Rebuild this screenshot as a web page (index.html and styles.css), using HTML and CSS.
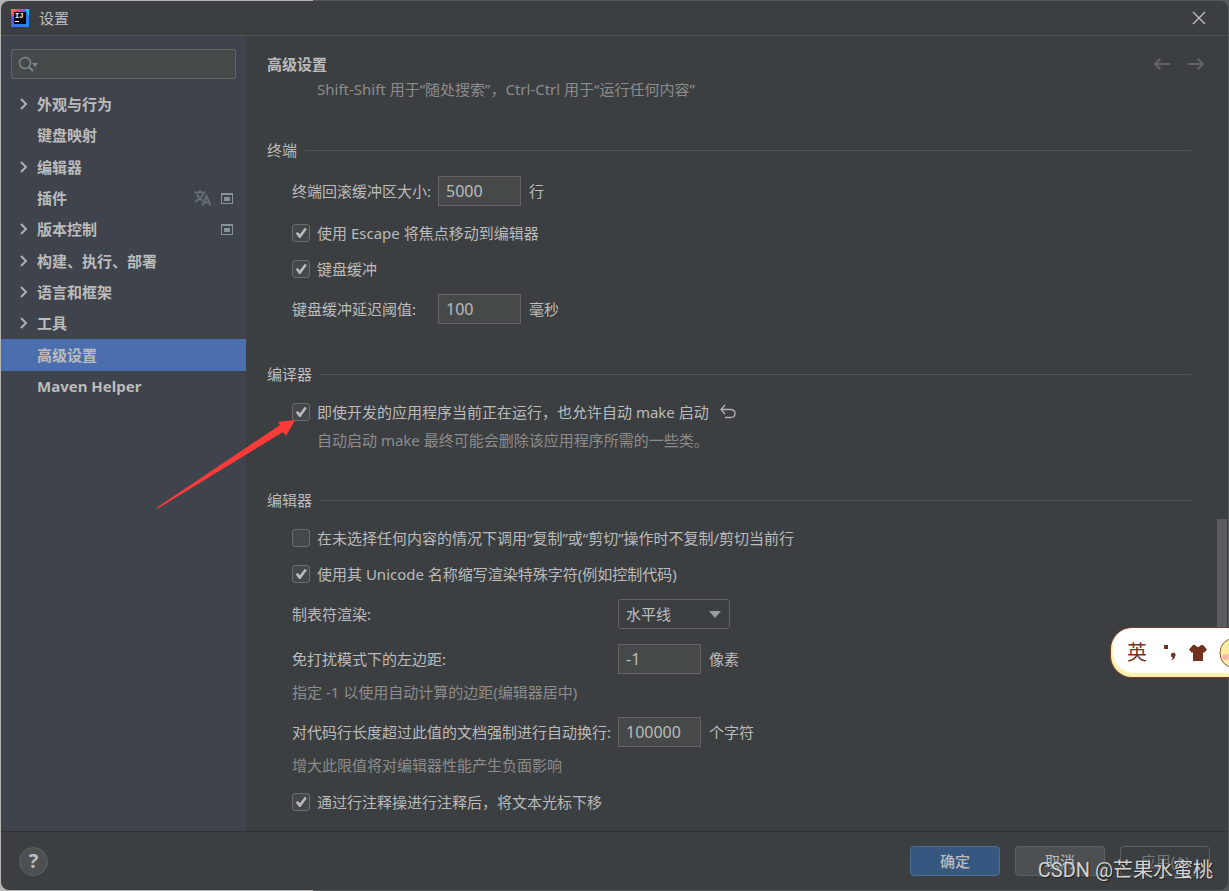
FILE: index.html
```html
<!DOCTYPE html>
<html lang="zh-CN">
<head>
  <meta charset="UTF-8">
  <meta name="viewport" content="width=device-width, initial-scale=1.0">
  <title>设置</title>
  <link rel="stylesheet" href="styles.css">
</head>
<body>
  <div class="window">
    <header class="titlebar">
      <svg class="logo" width="18" height="18" viewBox="0 0 18 18">
        <defs>
          <linearGradient id="ij" x1="0" y1="0" x2="1" y2="1">
            <stop offset="0" stop-color="#fd8224"/>
            <stop offset="0.25" stop-color="#e8457c"/>
            <stop offset="0.45" stop-color="#3f6df5"/>
            <stop offset="1" stop-color="#1d8bf8"/>
          </linearGradient>
        </defs>
        <rect width="18" height="18" fill="url(#ij)"/>
        <path d="M14 0h4v7z" fill="#22c0f5"/>
        <path d="M0 6l3 2v6l-3 2z" fill="#5a55e0"/>
        <rect x="3" y="3" width="12" height="12" fill="#080510"/>
        <text x="4" y="9">IJ</text>
        <path d="M4 12h4v1H4z" fill="#fff"/>
      </svg>
      <span class="window-title">设置</span>
      <button class="icon-btn" aria-label="关闭">
        <svg width="14" height="14" viewBox="0 0 14 14"><path d="M1 1l12 12M13 1L1 13" stroke="#c0c0c0" stroke-width="1.300"/></svg>
      </button>
    </header>

    <div class="main">
      <nav class="sidebar">
        <div class="search">
          <svg width="22" height="18" viewBox="0 0 22 18">
            <circle cx="7" cy="8" r="5.500" fill="none" stroke="#7f8b91" stroke-width="1.400"/>
            <path d="M11 12l4 4" stroke="#7f8b91" stroke-width="1.800"/>
            <path d="M14 8h6l-3 4z" fill="#7f8b91"/>
          </svg>
          <input type="text" aria-label="搜索">
        </div>
        <ul class="tree">
          <li><svg class="chevron" viewBox="0 0 8 12"><path d="M1 1l5 5-5 5"/></svg><a href="#">外观与行为</a></li>
          <li><a href="#">键盘映射</a></li>
          <li><svg class="chevron" viewBox="0 0 8 12"><path d="M1 1l5 5-5 5"/></svg><a href="#">编辑器</a></li>
          <li>
            <a href="#">插件</a>
            <svg class="lang" width="18" height="18" viewBox="0 0 18 18"><path d="M0.500 3.500h11M6 1v2.500M9.500 3.500Q8 9.500 1 12.500M3 5.500q2 4.500 6 6M8.500 16.500l4-9.500 4 9.500M10 13.500h5"/></svg>
            <svg class="project" width="12" height="11" viewBox="0 0 12 11"><path d="M0 0h12v11H0zM1 2v8h10V2z" fill-rule="evenodd"/><path d="M3 4h6v4H3z"/></svg>
          </li>
          <li>
            <svg class="chevron" viewBox="0 0 8 12"><path d="M1 1l5 5-5 5"/></svg><a href="#">版本控制</a>
            <svg class="project" width="12" height="11" viewBox="0 0 12 11"><path d="M0 0h12v11H0zM1 2v8h10V2z" fill-rule="evenodd"/><path d="M3 4h6v4H3z"/></svg>
          </li>
          <li><svg class="chevron" viewBox="0 0 8 12"><path d="M1 1l5 5-5 5"/></svg><a href="#">构建、执行、部署</a></li>
          <li><svg class="chevron" viewBox="0 0 8 12"><path d="M1 1l5 5-5 5"/></svg><a href="#">语言和框架</a></li>
          <li><svg class="chevron" viewBox="0 0 8 12"><path d="M1 1l5 5-5 5"/></svg><a href="#">工具</a></li>
          <li class="selected"><a href="#">高级设置</a></li>
          <li><a href="#">Maven Helper</a></li>
        </ul>
      </nav>

      <div class="content">
        <div class="content-head">
          <h1>高级设置</h1>
          <button class="icon-btn" aria-label="后退">
            <svg width="18" height="14" viewBox="0 0 18 14"><path d="M17 7H2M7.500 1.500L2 7l5.500 5.500" fill="none" stroke="#606263" stroke-width="2"/></svg>
          </button>
          <button class="icon-btn" aria-label="前进">
            <svg width="18" height="14" viewBox="0 0 18 14"><path d="M1 7h15M10.500 1.500L16 7l-5.500 5.500" fill="none" stroke="#606263" stroke-width="2"/></svg>
          </button>
        </div>

        <div class="scroll">
          <div class="page">
            <p class="hint indent first">Shift-Shift 用于“随处搜索”，Ctrl-Ctrl 用于“运行任何内容”</p>

            <section class="narrow">
              <h2>终端</h2>
              <div class="field">
                <label for="scrollback">终端回滚缓冲区大小:</label>
                <input type="text" id="scrollback" value="5000">
                <span>行</span>
              </div>
              <label class="check"><input type="checkbox" checked>使用 Escape 将焦点移动到编辑器</label>
              <label class="check"><input type="checkbox" checked>键盘缓冲</label>
              <div class="field">
                <label for="delay">键盘缓冲延迟阈值:</label>
                <input type="text" id="delay" value="100">
                <span>毫秒</span>
              </div>
            </section>

            <section>
              <h2>编译器</h2>
              <div class="check">
                <input type="checkbox" id="automake" checked>
                <label for="automake">即使开发的应用程序当前正在运行，也允许自动 make 启动</label>
                <button class="icon-btn reset" aria-label="重置">
                  <svg width="16" height="16" viewBox="0 0 16 16"><path d="M5 1L1 5.500 5 10M1 5.500h9.500q4.500 0 4.500 4t-4.500 4H5" fill="none" stroke="#afb1b3" stroke-width="1.300"/></svg>
                </button>
              </div>
              <p class="hint indent">自动启动 make 最终可能会删除该应用程序所需的一些类。</p>
            </section>

            <section class="wide">
              <h2>编辑器</h2>
              <label class="check"><input type="checkbox">在未选择任何内容的情况下调用“复制”或“剪切”操作时不复制/剪切当前行</label>
              <label class="check"><input type="checkbox" checked>使用其 Unicode 名称缩写渲染特殊字符(例如控制代码)</label>
              <div class="field">
                <label for="tabs">制表符渲染:</label>
                <div class="select">
                  <select id="tabs">
                    <option>水平线</option>
                  </select>
                </div>
              </div>
              <div class="field">
                <label for="margin">免打扰模式下的左边距:</label>
                <input type="text" id="margin" value="-1">
                <span>像素</span>
              </div>
              <p class="hint">指定 -1 以使用自动计算的边距(编辑器居中)</p>
              <div class="field">
                <label for="wrap">对代码行长度超过此值的文档强制进行自动换行:</label>
                <input type="text" id="wrap" value="100000">
                <span>个字符</span>
              </div>
              <p class="hint">增大此限值将对编辑器性能产生负面影响</p>
              <label class="check"><input type="checkbox" checked>通过行注释操进行注释后，将文本光标下移</label>
            </section>
          </div>
        </div>
        <div class="thumb"></div>
      </div>
    </div>

    <footer class="footer">
      <button class="help" aria-label="帮助">?</button>
      <button class="btn primary">确定</button>
      <button class="btn">取消</button>
      <button class="btn" disabled>应用(A)</button>
    </footer>
  </div>

  <svg class="pointer" width="140" height="90" viewBox="0 0 140 90">
    <path d="M138 1L121 3l2 3L0 88.500V90L126 13l3 4z" fill="#ff3b38"/>
  </svg>

  <div class="ime">
    <span>英</span>
    <svg width="14" height="18" viewBox="0 0 14 18"><path d="M1 1h4v4H1z"/><path d="M8 11a2.300 2.300 0 1 1 4 1.500Q12 15 8 16.500q2-2 1.500-3A2.300 2.300 0 0 1 8 11z"/></svg>
    <svg class="shirt" width="20" height="18" viewBox="0 0 20 18"><path d="M5 1h2q3 4 6 0h2l4 4.500-3 3.500-1-1v9H5V8L4 9 1 5.500z"/></svg>
    <svg class="face" width="10" height="30" viewBox="0 0 10 30"><ellipse cx="13" cy="15" rx="12" ry="14" fill="#f8efa0" stroke="#8b5a35"/><ellipse cx="7" cy="19" rx="4" ry="3" fill="#fbb9ab" stroke="none"/></svg>
  </div>

  <div class="watermark">CSDN @芒果水蜜桃</div>
</body>
</html>
```
FILE: styles.css
```css
* {
  box-sizing: border-box;
}
body {
  margin: 0;
  height: 100vh;
  padding: 1px;
  display: flex;
  overflow: hidden;
  background: linear-gradient(to right, #b4b4b4 313px, #55585a 313px);
  font: 15px/20px "Noto Sans", "Noto Sans CJK SC", sans-serif;
  color: #bbbbbb;
}
h1, h2, p, ul {
  margin: 0;
  padding: 0;
}
input, select, button {
  font: inherit;
  color: inherit;
  margin: 0;
}
.window {
  flex: 1;
  min-width: 0;
  display: flex;
  flex-direction: column;
  background: #3c3f41;
  border-radius: 8px;
  overflow: hidden;
}
.icon-btn {
  display: flex;
  padding: 0;
  border: none;
  background: none;
}

/* title bar */
.titlebar {
  display: flex;
  align-items: center;
  height: 35px;
  padding: 0 22px 0 10px;
  border-bottom: 1px solid #515457;
}
.logo text {
  font: bold 7px "Liberation Mono", monospace;
  fill: #ffffff;
}
.window-title {
  flex: 1;
  margin-left: 10px;
}

.main {
  flex: 1;
  min-height: 0;
  display: flex;
}

/* sidebar */
.sidebar {
  width: 245px;
  flex-shrink: 0;
  padding-top: 13px;
  background: #3e434c;
}
.search {
  display: flex;
  align-items: center;
  height: 30px;
  margin: 0 10px;
  padding-left: 6px;
  background: #45494a;
  border: 1px solid #646464;
  border-radius: 3px;
}
.search input {
  flex: 1;
  min-width: 0;
  border: none;
  outline: none;
  background: none;
}
.tree {
  display: grid;
  grid-auto-rows: 1fr;
  height: 313px;
  margin-top: 10px;
  list-style: none;
}
.tree li {
  position: relative;
  display: flex;
  align-items: center;
  gap: 12px;
  padding: 0 13px 1px 36px;
}
.tree a {
  flex: 1;
  color: inherit;
  font-weight: bold;
  text-decoration: none;
}
.tree .selected {
  background: #4b6eaf;
}
.chevron {
  position: absolute;
  left: 19px;
  width: 8px;
  height: 12px;
  fill: none;
  stroke: #afb1b3;
  stroke-width: 2;
}
.lang {
  margin-right: -3px;
  fill: none;
  stroke: #646c75;
  stroke-width: 2;
}
.project {
  fill: #87939a;
}

/* content */
.content {
  position: relative;
  flex: 1;
  min-width: 0;
  display: flex;
  flex-direction: column;
}
.content-head {
  display: flex;
  align-items: center;
  gap: 16px;
  height: 47px;
  padding: 9px 23px 0 21px;
}
.content-head h1 {
  flex: 1;
  font-size: 15px;
}
.scroll {
  flex: 1;
  overflow: hidden;
}
.page {
  margin-top: -4px;
  padding: 0 37px 0 21px;
}
h2 {
  display: flex;
  align-items: center;
  gap: 8px;
  margin-top: 40px;
  padding-bottom: 1px;
  font-size: 15px;
  font-weight: normal;
}
h2::after {
  content: "";
  flex: 1;
  border-top: 1px solid #515457;
}
.field {
  display: flex;
  align-items: center;
  gap: 8px;
  margin: 15px 0 0 25px;
}
.field label {
  flex-shrink: 0;
  margin-right: -8px;
}
.narrow .field label {
  width: 146px;
}
.wide .field label {
  width: 326px;
}
.field input {
  width: 83px;
  height: 30px;
  padding: 0 7px;
  font-size: 16px;
  background: #45494a;
  border: 1px solid #646464;
}
.select {
  position: relative;
}
.select select {
  width: 112px;
  height: 30px;
  padding: 0 7px;
  appearance: none;
  background: #3c3f41;
  border: 1px solid #646464;
  border-radius: 3px;
}
.select::after {
  content: "";
  position: absolute;
  right: 9px;
  top: 12px;
  border: 6px solid transparent;
  border-top: 7px solid #9a9da0;
  border-bottom: none;
  pointer-events: none;
}
.check {
  display: flex;
  align-items: center;
  margin: 16px 0 0 25px;
}
h2 + .check,
.hint + .check,
.field + .check {
  margin-top: 17px;
}
.check input {
  width: 18px;
  height: 18px;
  margin-right: 7px;
  appearance: none;
  background: #43494a;
  border: 1px solid #6b6b6b;
  border-radius: 3px;
}
.check input:checked::before {
  content: "";
  display: block;
  height: 16px;
  background: #bbbbbb;
  clip-path: polygon(17% 52%, 29% 43%, 43% 58%, 74% 17%, 86% 26%, 47% 82%, 38% 82%);
}
.reset {
  margin-left: 11px;
}
.hint {
  margin: 8px 0 0 25px;
  color: #8c8c8c;
}
.hint.indent {
  margin-left: 50px;
}
.hint.first {
  margin-top: 0;
  padding-bottom: 1px;
}
.thumb {
  position: absolute;
  right: 1px;
  top: 483px;
  width: 10px;
  height: 130px;
  background: #5a5b5c;
}

/* footer */
.footer {
  display: flex;
  align-items: center;
  gap: 15px;
  height: 59px;
  padding: 0 18px;
  border-top: 1px solid #2f3133;
}
.help {
  width: 29px;
  height: 29px;
  margin-right: auto;
  padding: 0;
  font-size: 20px;
  font-weight: bold;
  background: #4c5052;
  border: 1px solid #5e6060;
  border-radius: 50%;
}
.btn {
  width: 90px;
  height: 30px;
  padding: 0;
  background: #4c5052;
  border: 1px solid #5e6060;
  border-radius: 4px;
}
.btn.primary {
  background: #365880;
  border-color: #4c708c;
  font-weight: 500;
}
.btn:disabled {
  background: none;
  color: #777777;
}

/* things floating over the window */
.pointer {
  position: absolute;
  left: 157px;
  top: 419px;
}
.ime {
  position: absolute;
  right: 0;
  top: 627px;
  width: 119px;
  height: 51px;
  display: flex;
  align-items: center;
  padding-left: 16px;
  background: #ffffff;
  border: 1px solid #7a3c22;
  border-right: none;
  border-radius: 22px 0 0 22px;
  box-shadow: inset 2px -4px 2px #f8f2ae;
  color: #70331f;
  fill: #70331f;
  font-size: 20px;
}
.ime span {
  margin-right: 16px;
}
.ime .shirt {
  margin-left: 11px;
}
.ime .face {
  margin-left: auto;
}
.watermark {
  position: absolute;
  right: 16px;
  bottom: 8px;
  font: 20px/26px Roboto, "Noto Sans CJK SC", sans-serif;
  color: #d2d2d2;
  text-shadow: 1px 1px 1px #222222;
}
```
